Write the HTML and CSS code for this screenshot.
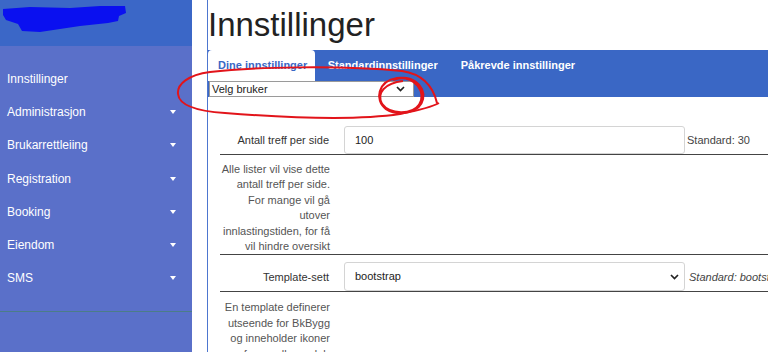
FILE: index.html
```html
<!DOCTYPE html>
<html lang="no">
<head>
<meta charset="utf-8">
<title>Innstillinger</title>
<link rel="stylesheet" href="styles.css">
</head>
<body>
<aside class="sidebar">
  <div class="brand">
    <svg class="scribble" width="130" height="36" viewBox="0 0 130 36"><path d="M3,9 L30,7 L70,8 L100,6 L125,6 L126,13 L119,16 L118,21 L108,23 L80,26 L60,29 L40,32 L22,31 L18,24 L6,20 L3,15 Z" fill="#0a10f0"/></svg>
  </div>
  <ul class="nav">
    <li class="nav-item">Innstillinger</li>
    <li class="nav-item">Administrasjon<span class="caret"></span></li>
    <li class="nav-item">Brukarrettleiing<span class="caret"></span></li>
    <li class="nav-item">Registration<span class="caret"></span></li>
    <li class="nav-item">Booking<span class="caret"></span></li>
    <li class="nav-item">Eiendom<span class="caret"></span></li>
    <li class="nav-item">SMS<span class="caret"></span></li>
  </ul>
  <div class="nav-sep"></div>
</aside>
<main class="main">
  <h1 class="title">Innstillinger</h1>
  <div class="tabbar">
    <ul class="tabs">
      <li class="tab active">Dine innstillinger</li>
      <li class="tab">Standardinnstillinger</li>
      <li class="tab">Påkrevde innstillinger</li>
    </ul>
    <div class="user-select">
      <span>Velg bruker</span>
      <svg class="chev" width="9" height="6" viewBox="0 0 9 6"><path d="M1,1 L4.5,4.5 L8,1" fill="none" stroke="#222" stroke-width="1.7"/></svg>
    </div>
  </div>
  <div class="form">
    <div class="row row-first">
      <div class="label">Antall treff per side</div>
      <div class="field"><div class="input">100</div></div>
      <div class="help">Standard: 30</div>
    </div>
    <div class="row desc-row">
      <div class="desc">Alle lister vil vise dette<br>antall treff per side.<br>For mange vil gå<br>utover<br>innlastingstiden, for få<br>vil hindre oversikt</div>
    </div>
    <div class="row row-sel">
      <div class="label">Template-sett</div>
      <div class="field"><div class="input select"><span>bootstrap</span><svg class="chev2" width="9" height="6" viewBox="0 0 9 6"><path d="M1,1 L4.5,4.5 L8,1" fill="none" stroke="#222" stroke-width="1.7"/></svg></div></div>
      <div class="help italic">Standard: bootstrap</div>
    </div>
    <div class="row desc-row last">
      <div class="desc">En template definerer<br>utseende for BkBygg<br>og inneholder ikoner<br>som farger alle moduler</div>
    </div>
  </div>
</main>
<svg class="annot" width="768" height="352" viewBox="0 0 768 352">
  <path d="M437,103 C433,86 422,74 402,71 C340,65 252,67 210,72 C188,75 177,84 178,94 C179,104 194,111 225,113 C290,118 360,120 400,114 C420,110 432,107 439,103" fill="none" stroke="#e2141a" stroke-width="2"/>
  <path d="M393,80 C410,73 426,85 423,99 C420,113 399,117 386,109 C374,100 378,81 397,78 C415,76 427,92 419,105 C412,115 390,115 382,104 C376,93 385,83 403,81" fill="none" stroke="#e2141a" stroke-width="2.2"/>
</svg>
</body>
</html>
```
FILE: styles.css
```css
html, body {
  margin: 0;
  padding: 0;
}
body {
  display: flex;
  width: 768px;
  height: 352px;
  overflow: hidden;
  position: relative;
  font-family: "Liberation Sans", Arial, sans-serif;
  background: #fff;
  color: #333;
}
.sidebar {
  width: 192px;
  flex: none;
  background: #5a70c9;
  height: 352px;
}
.brand {
  height: 46px;
  background: #3b67c7;
}
.scribble {
  display: block;
}
.nav {
  list-style: none;
  margin: 0;
  padding: 16px 0 0 0;
}
.nav-item {
  height: 33.3px;
  display: flex;
  align-items: center;
  justify-content: space-between;
  padding: 0 16px 0 7px;
  color: #fff;
  font-size: 12px;
}
.caret {
  width: 0;
  height: 0;
  border-left: 3.5px solid transparent;
  border-right: 3.5px solid transparent;
  border-top: 4px solid #fff;
}
.nav-sep {
  margin-top: 16px;
  height: 1px;
  background: #4b7d88;
}
.main {
  flex: 1;
  min-width: 0;
  margin-left: 15px;
  border-left: 1px solid #4d76cf;
}
.title {
  margin: 0;
  height: 50px;
  padding-left: 0;
  font-weight: 400;
  font-size: 33px;
  line-height: 49px;
  color: #222;
}
.tabbar {
  background: #3a67c5;
  height: 47px;
  padding-left: 0;
}
.tabs {
  list-style: none;
  margin: 0;
  padding: 0;
  display: flex;
  height: 31px;
}
.tab {
  color: #fff;
  font-weight: 700;
  font-size: 11px;
  padding: 0 11.5px;
  line-height: 31px;
  white-space: nowrap;
}
.tab.active {
  background: #fff;
  color: #3a67c5;
  border-radius: 4px 4px 0 0;
  padding: 0 8px 0 10px;
  margin-right: 1px;
}
.user-select {
  width: 201px;
  height: 14px;
  margin-left: 1px;
  background: #fff;
  border: 1px solid #9a9a9a;
  font-size: 11px;
  line-height: 14px;
  padding-left: 2px;
  display: flex;
  justify-content: space-between;
  align-items: center;
  color: #222;
}
.chev {
  margin-right: 8px;
}
.form {
  padding: 25px 0 0 12px;
}
.row {
  display: flex;
  align-items: center;
  border-bottom: 1px solid #444;
}
.row-first {
  padding-top: 4px;
}
.row-sel {
  padding-top: 7px;
}
.label {
  width: 109px;
  flex: none;
  text-align: right;
  font-size: 11px;
  color: #333;
  margin-right: 15px;
  white-space: nowrap;
}
.field {
  width: 341px;
  flex: none;
}
.input {
  box-sizing: border-box;
  height: 28px;
  border: 1px solid #d4d4d4;
  border-radius: 3px;
  font-size: 11px;
  line-height: 26px;
  padding-left: 10px;
  color: #222;
}
.select {
  height: 29px;
  line-height: 27px;
  display: flex;
  justify-content: space-between;
  align-items: center;
  padding-right: 5px;
}
.help {
  padding-left: 2px;
  font-size: 11px;
  color: #444;
  white-space: nowrap;
}
.italic {
  font-style: italic;
  padding-left: 4px;
}
.desc-row {
  padding-top: 7px;
  align-items: flex-start;
}
.desc {
  width: 110px;
  flex: none;
  text-align: right;
  font-size: 11px;
  line-height: 15.4px;
  color: #555;
  white-space: nowrap;
}
.last {
  padding-top: 8px;
}
.annot {
  position: absolute;
  left: 0;
  top: 0;
  pointer-events: none;
}
```
